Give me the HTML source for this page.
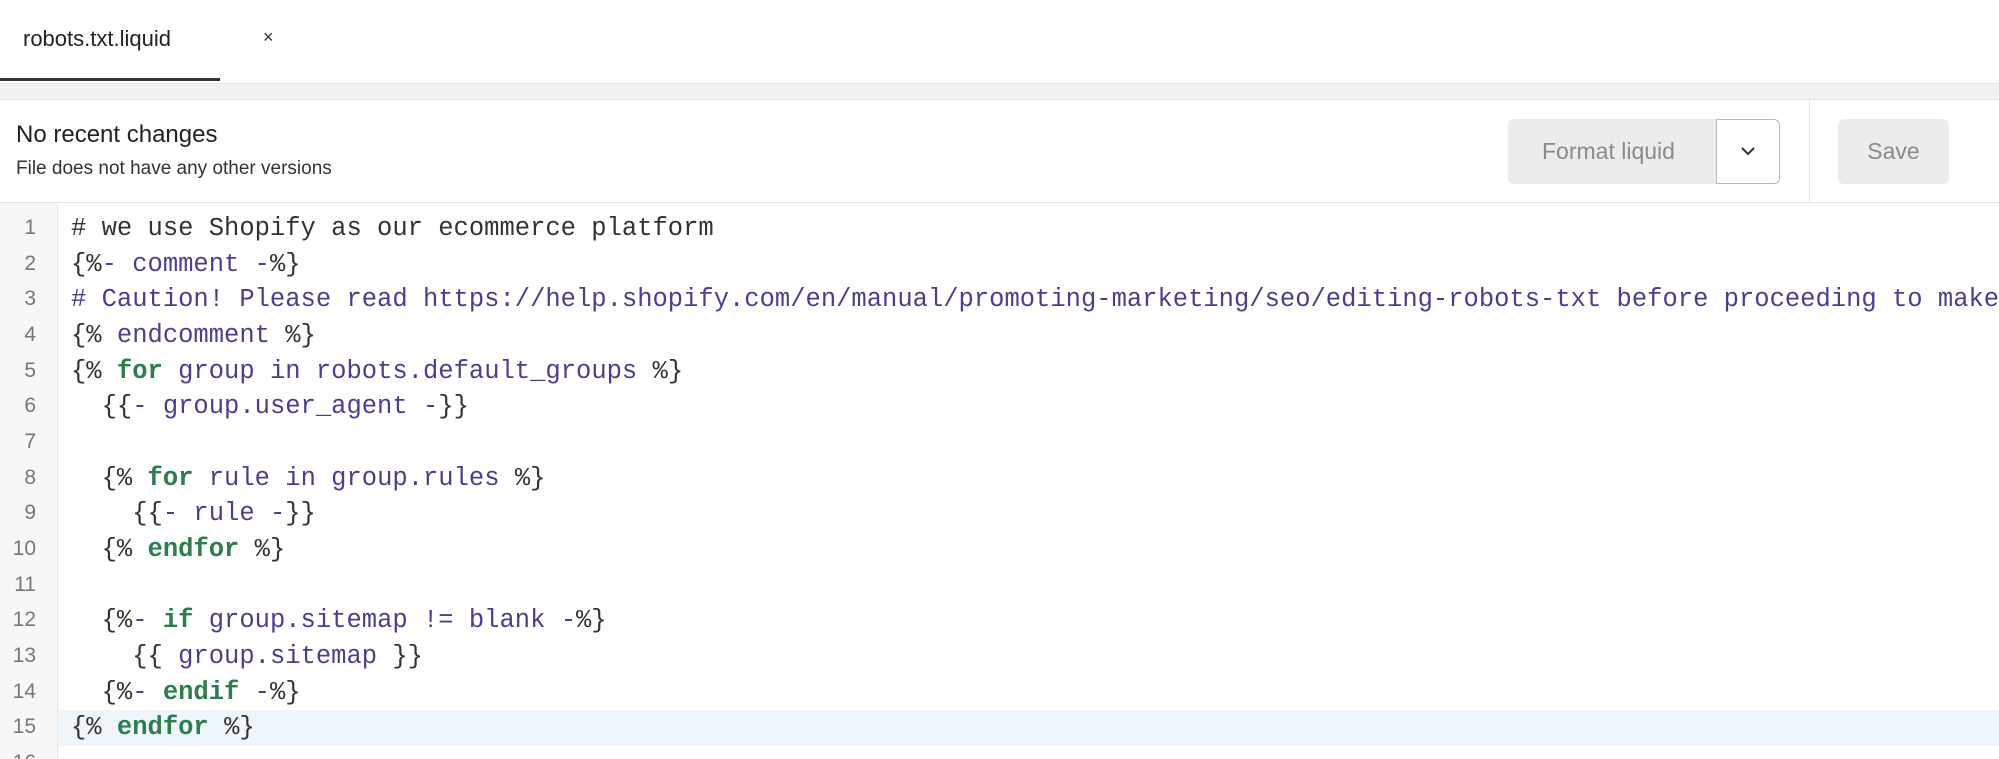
<!DOCTYPE html>
<html><head><meta charset="utf-8"><style>
*{margin:0;padding:0;box-sizing:border-box}
html,body{width:1999px;height:759px;overflow:hidden}
body{background:#fff;font-family:"Liberation Sans",sans-serif;position:relative}
.tab{position:absolute;left:23px;top:26px;font-size:22px;color:#222}
.x{position:absolute;left:263px;top:27px;font-size:18px;color:#333}
.ul{position:absolute;left:0;top:78px;width:220px;height:3px;background:#2d3b36}
.band{position:absolute;left:0;top:83px;width:1999px;height:17px;background:#f1f1f1;border-top:1px solid #e3e3e3;border-bottom:1px solid #e3e3e3}
.h1{position:absolute;left:16px;top:121px;font-size:24px;color:#222}
.h2{position:absolute;left:16px;top:158px;font-size:19px;color:#333}
.hb{position:absolute;left:0;top:202px;width:1999px;height:1px;background:#e3e3e3}
.vs{position:absolute;left:1809px;top:100px;width:1px;height:102px;background:#e3e3e3}
.fmt{position:absolute;left:1508px;top:119px;width:272px;height:65px;background:#ececec;border-radius:6px}
.fmt span{position:absolute;left:34px;top:19px;font-size:23px;color:#8a8a8a}
.dd{position:absolute;left:1716px;top:119px;width:64px;height:65px;background:#fff;border:1.5px solid #b8b8b8;border-radius:0 6px 6px 0}
.save{position:absolute;left:1838px;top:119px;width:111px;height:65px;background:#ececec;border-radius:6px;font-size:23px;color:#8a8a8a;text-align:center;line-height:65px}
.code{position:absolute;left:0;top:203px;width:1999px;height:556px;overflow:hidden}
.gut{position:absolute;left:0;top:0;width:58px;height:556px;background:#f7f7f7;border-right:1px solid #e6e6e6}
.hl{position:absolute;left:58px;top:507px;width:1941px;height:36px;background:#eef6fb}
.n{position:absolute;left:0;width:36px;text-align:right;font-family:"Liberation Sans",sans-serif;font-size:21px;color:#777}
.l{position:absolute;left:71px;font-family:"Liberation Mono",monospace;font-size:25.5px;color:#4a3f8f;white-space:pre}
.b{color:#333}.k{color:#2e7d4f;font-weight:bold}.c{color:#333}
</style></head><body>
<div class="tab">robots.txt.liquid</div><div class="x">×</div><div class="ul"></div>
<div class="band"></div>
<div class="h1">No recent changes</div><div class="h2">File does not have any other versions</div>
<div class="vs"></div>
<div class="fmt"><span>Format liquid</span></div>
<div class="dd"><svg width="64" height="65" style="position:absolute;left:-1px;top:-1px"><path d="M26 29l6 6 6-6" fill="none" stroke="#333" stroke-width="2"/></svg></div>
<div class="save">Save</div>
<div class="hb"></div>
<div class="code">
<div class="gut"></div>
<div class="hl"></div>
<div class="n" style="top:13px">1</div><div class="n" style="top:49px">2</div><div class="n" style="top:84px">3</div><div class="n" style="top:120px">4</div><div class="n" style="top:156px">5</div><div class="n" style="top:191px">6</div><div class="n" style="top:227px">7</div><div class="n" style="top:263px">8</div><div class="n" style="top:298px">9</div><div class="n" style="top:334px">10</div><div class="n" style="top:370px">11</div><div class="n" style="top:405px">12</div><div class="n" style="top:441px">13</div><div class="n" style="top:477px">14</div><div class="n" style="top:512px">15</div><div class="n" style="top:548px">16</div>
<div class="l c" style="top:11px"># we use Shopify as our ecommerce platform</div>
<div class="l" style="top:47px"><span class="b">{%</span>- comment -<span class="b">%}</span></div>
<div class="l" style="top:82px"># Caution! Please read https://help.shopify.com/en/manual/promoting-marketing/seo/editing-robots-txt before proceeding to make changes</div>
<div class="l" style="top:118px"><span class="b">{%</span> endcomment <span class="b">%}</span></div>
<div class="l" style="top:154px"><span class="b">{%</span> <span class="k">for</span> group in robots.default_groups <span class="b">%}</span></div>
<div class="l" style="top:189px">  <span class="b">{{</span>- group.user_agent -<span class="b">}}</span></div>
<div class="l" style="top:261px">  <span class="b">{%</span> <span class="k">for</span> rule in group.rules <span class="b">%}</span></div>
<div class="l" style="top:296px">    <span class="b">{{</span>- rule -<span class="b">}}</span></div>
<div class="l" style="top:332px">  <span class="b">{%</span> <span class="k">endfor</span> <span class="b">%}</span></div>
<div class="l" style="top:403px">  <span class="b">{%</span>- <span class="k">if</span> group.sitemap != blank -<span class="b">%}</span></div>
<div class="l" style="top:439px">    <span class="b">{{</span> group.sitemap <span class="b">}}</span></div>
<div class="l" style="top:475px">  <span class="b">{%</span>- <span class="k">endif</span> -<span class="b">%}</span></div>
<div class="l" style="top:510px"><span class="b">{%</span> <span class="k">endfor</span> <span class="b">%}</span></div>
</div>
</body></html>
